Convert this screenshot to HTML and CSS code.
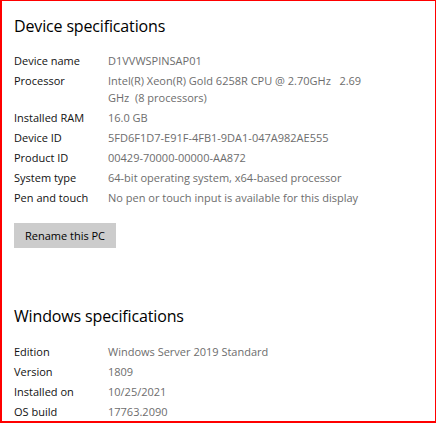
FILE: index.html
```html
<!DOCTYPE html>
<html>
<head>
<meta charset="utf-8">
<link rel="stylesheet" href="styles.css">
</head>
<body>
<div class="frame">
  <section class="specs">
    <h2 class="title">Device specifications</h2>
    <div class="grid">
      <div class="label">Device name</div><div class="value">D1VVWSPINSAP01</div>
      <div class="label">Processor</div><div class="value">Intel(R) Xeon(R) Gold 6258R CPU @ 2.70GHz&nbsp;&nbsp; 2.69 GHz&nbsp; (8 processors)</div>
      <div class="label">Installed RAM</div><div class="value">16.0 GB</div>
      <div class="label">Device ID</div><div class="value">5FD6F1D7-E91F-4FB1-9DA1-047A982AE555</div>
      <div class="label">Product ID</div><div class="value">00429-70000-00000-AA872</div>
      <div class="label">System type</div><div class="value">64-bit operating system, x64-based processor</div>
      <div class="label">Pen and touch</div><div class="value">No pen or touch input is available for this display</div>
    </div>
    <button class="btn">Rename this PC</button>
  </section>
  <section class="specs win">
    <h2 class="title">Windows specifications</h2>
    <div class="grid">
      <div class="label">Edition</div><div class="value">Windows Server 2019 Standard</div>
      <div class="label">Version</div><div class="value">1809</div>
      <div class="label">Installed on</div><div class="value">10/25/2021</div>
      <div class="label">OS build</div><div class="value">17763.2090</div>
    </div>
  </section>
</div>
</body>
</html>
```

FILE: styles.css
```css
html, body {
  margin: 0;
  padding: 0;
  background: #fff;
}
body {
  font-family: "Open Sans", "Noto Sans", sans-serif;
  color: #000;
}
.frame {
  box-sizing: border-box;
  width: 436px;
  height: 423px;
  border-style: solid;
  border-color: #ff0000;
  border-width: 1px 1px 2px 2px;
  padding: 0 12px;
  overflow: hidden;
}
.title {
  margin: 11px 0 12px;
  font-size: 16px;
  line-height: 28px;
  letter-spacing: -0.15px;
  font-weight: 400;
  color: #000;
}
.grid {
  display: grid;
  grid-template-columns: 94px 272px;
  row-gap: 3px;
  font-size: 11px;
  line-height: 17px;
}
.label {
  color: #111;
}
.value {
  color: #6d6d6d;
}
.btn {
  display: block;
  margin-top: 17px;
  width: 102px;
  height: 25px;
  border: none;
  background: #cccccc;
  color: #000;
  font-family: inherit;
  font-size: 11px;
  padding: 0;
}
.win .title {
  margin-top: 54px;
  margin-bottom: 13px;
}
```
